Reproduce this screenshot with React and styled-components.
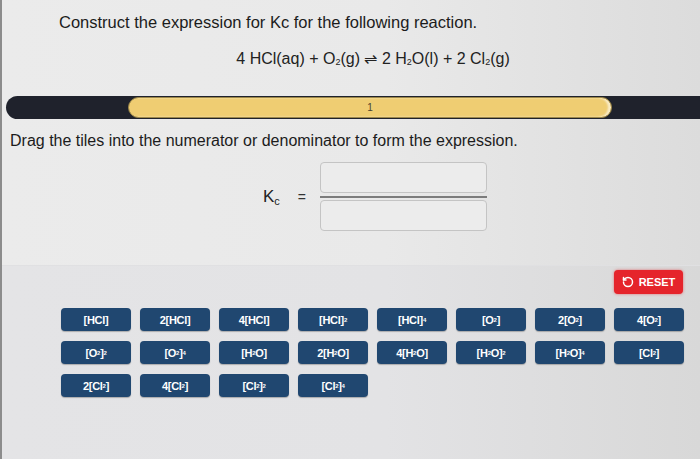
import styled, { createGlobalStyle } from 'styled-components';
import { RotateCcw } from 'lucide-react';

const GlobalStyle = createGlobalStyle`
    html, body {
        margin: 0;
        padding: 0;
        background: #e6e6e6;
    }
    body {
        font-family: "Liberation Sans", Arial, sans-serif;
        color: #1e1e1e;
    }
`;

const Page = styled.div`
    width: 700px;
    height: 459px;
    box-sizing: border-box;
    border-left: 2px solid #8c8c8c;
    background: linear-gradient(90deg, #ebebeb 0%, #e9e9e9 55%, #dcdcdc 100%);
    display: flex;
    flex-direction: column;
    overflow: hidden;
`;

const Title = styled.div`
    font-size: 16.5px;
    padding: 13px 0 0 57px;
    color: #1c1c1c;
`;

const Equation = styled.div`
    font-size: 16px;
    margin-top: 17px;
    padding-left: 44px;
    text-align: center;
    color: #222;

    sub {
        font-size: 9px;
        vertical-align: -1px;
    }
`;

const ProgressTrack = styled.div`
    margin: 28px 0 0 4px;
    height: 23px;
    background: #1f222c;
    border-radius: 12px 0 0 12px;
    display: flex;
    align-items: center;
    padding-left: 122px;
`;

const ProgressFill = styled.div`
    width: 484px;
    height: 21px;
    box-sizing: border-box;
    background: #efcd72;
    border: 1px solid #9c8748;
    border-radius: 11px;
    box-shadow: inset -3px 0 2px rgba(255, 255, 255, 0.6);
    display: flex;
    align-items: center;
    justify-content: center;
    font-size: 10px;
    color: #4a4230;
`;

const Instruction = styled.div`
    font-size: 16px;
    margin-top: 13px;
    padding-left: 8px;
    color: #1c1c1c;
`;

const ExpressionRow = styled.div`
    display: flex;
    align-items: center;
    justify-content: center;
    padding-left: 48px;
    margin-top: 12px;
`;

const KLabel = styled.div`
    font-size: 17px;
    color: #222;
    margin-right: 18px;

    sub {
        font-size: 11px;
        vertical-align: -3px;
    }
`;

const Equals = styled.div`
    font-size: 14px;
    color: #333;
    margin-right: 14px;
`;

const Fraction = styled.div`
    display: flex;
    flex-direction: column;
    width: 167px;
`;

const DropBox = styled.div`
    height: 29px;
    border: 1px solid #c4c4c4;
    border-radius: 4px;
    background: #ececec;
`;

const FractionLine = styled.div`
    height: 2px;
    background: #7c7c7c;
    margin: 3px 0 2px;
`;

const TilePanel = styled.div`
    margin-top: 34px;
    flex: 1;
    background: linear-gradient(90deg, #e4e4e6 0%, #e3e3e5 55%, #d8d8d8 100%);
    border-top: 1px solid #e0e0e2;
    padding-top: 4px;
`;

const ResetRow = styled.div`
    display: flex;
    justify-content: flex-end;
    padding-right: 17px;
`;

const ResetButton = styled.button`
    width: 69px;
    height: 24px;
    border: none;
    border-radius: 4px;
    background: #e5242b;
    box-shadow: 0 0 3px rgba(229, 36, 43, 0.6);
    color: #fff;
    font-family: "Liberation Sans", Arial, sans-serif;
    font-weight: 700;
    font-size: 11px;
    display: flex;
    align-items: center;
    justify-content: center;
    gap: 5px;
    padding: 0;
`;

const TileGrid = styled.div`
    display: grid;
    grid-template-columns: repeat(8, 70px);
    column-gap: 9px;
    row-gap: 10px;
    padding-left: 59px;
    margin-top: 14px;
`;

const Tile = styled.div`
    height: 23px;
    border-radius: 4px;
    background: #204770;
    box-shadow: 0 1px 1px rgba(0, 0, 0, 0.25);
    color: #fff;
    font-weight: 700;
    font-size: 11px;
    letter-spacing: -0.3px;
    display: flex;
    align-items: center;
    justify-content: center;

    sub {
        font-size: 6px;
        vertical-align: -1px;
    }
    sup {
        font-size: 6px;
        vertical-align: 4px;
    }
`;

const tiles = [
    { c: '', s: 'HCl', n: '', p: '' },
    { c: '2', s: 'HCl', n: '', p: '' },
    { c: '4', s: 'HCl', n: '', p: '' },
    { c: '', s: 'HCl', n: '', p: '2' },
    { c: '', s: 'HCl', n: '', p: '4' },
    { c: '', s: 'O', n: '2', p: '' },
    { c: '2', s: 'O', n: '2', p: '' },
    { c: '4', s: 'O', n: '2', p: '' },
    { c: '', s: 'O', n: '2', p: '2' },
    { c: '', s: 'O', n: '2', p: '4' },
    { c: '', s: 'H', n: '2', p: '', t: 'O' },
    { c: '2', s: 'H', n: '2', p: '', t: 'O' },
    { c: '4', s: 'H', n: '2', p: '', t: 'O' },
    { c: '', s: 'H', n: '2', p: '2', t: 'O' },
    { c: '', s: 'H', n: '2', p: '4', t: 'O' },
    { c: '', s: 'Cl', n: '2', p: '' },
    { c: '2', s: 'Cl', n: '2', p: '' },
    { c: '4', s: 'Cl', n: '2', p: '' },
    { c: '', s: 'Cl', n: '2', p: '2' },
    { c: '', s: 'Cl', n: '2', p: '4' },
];

function App() {
    return (
        <Page>
            <GlobalStyle />
            <Title>Construct the expression for Kc for the following reaction.</Title>
            <Equation>
                4 HCl(aq) + O<sub>2</sub>(g) ⇌ 2 H<sub>2</sub>O(l) + 2 Cl<sub>2</sub>(g)
            </Equation>
            <ProgressTrack>
                <ProgressFill>1</ProgressFill>
            </ProgressTrack>
            <Instruction>Drag the tiles into the numerator or denominator to form the expression.</Instruction>
            <ExpressionRow>
                <KLabel>K<sub>c</sub></KLabel>
                <Equals>=</Equals>
                <Fraction>
                    <DropBox />
                    <FractionLine />
                    <DropBox />
                </Fraction>
            </ExpressionRow>
            <TilePanel>
                <ResetRow>
                    <ResetButton>
                        <RotateCcw size={12} strokeWidth={3} />
                        RESET
                    </ResetButton>
                </ResetRow>
                <TileGrid>
                    {tiles.map((t, i) => (
                        <Tile key={i}>
                            {t.c}[{t.s}{t.n && <sub>{t.n}</sub>}{t.t}]{t.p && <sup>{t.p}</sup>}
                        </Tile>
                    ))}
                </TileGrid>
            </TilePanel>
        </Page>
    );
}

export default App;
